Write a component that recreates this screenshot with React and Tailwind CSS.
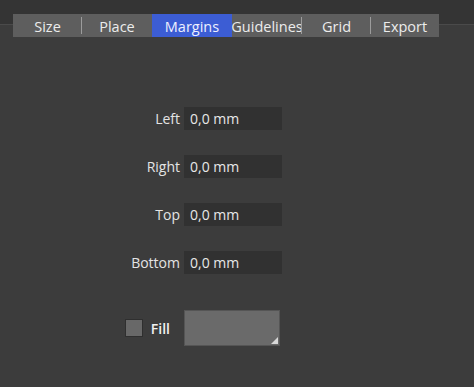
import React from "react";

const TABS = [
  { label: "Size", w: "w-[69px]", sep: true },
  { label: "Place", w: "w-[70px]", sep: false },
  { label: "Margins", w: "w-[80px]", sep: false, active: true },
  { label: "Guidelines", w: "w-[70px]", sep: true },
  { label: "Grid", w: "w-[69px]", sep: true },
  { label: "Export", w: "w-[68px]", sep: false },
];

const FIELDS = ["Left", "Right", "Top", "Bottom"];

export default function App() {
  return (
    <div
      className="w-[474px] h-[387px] overflow-hidden bg-[#3c3c3c] text-[#e2e2e2] bg-[linear-gradient(to_bottom,#343434_0,#343434_24px,#4a4a4a_24px,#4a4a4a_25px,#3c3c3c_25px)]"
      style={{ fontFamily: '"Open Sans", "Noto Sans", sans-serif' }}
    >
      <div className="flex pt-[14px] pl-[13px]">
        {TABS.map((t) => (
          <div
            key={t.label}
            className={`${t.w} h-[23px] flex items-center justify-center relative pt-[3px] text-[14.5px] leading-none ${
              t.active ? "bg-[#3c5dd4] text-[#eef0ff]" : "bg-[#5e5e5e] text-[#ececec]"
            }`}
          >
            <span className="whitespace-nowrap">{t.label}</span>
            {t.sep && (
              <span className="absolute right-0 top-[3px] h-[17px] w-px bg-[#9c9c9c]" />
            )}
          </div>
        ))}
      </div>

      <div className="mt-[70px] grid grid-cols-[180px_98px] gap-x-[4px] gap-y-[25px]">
        {FIELDS.map((f) => (
          <React.Fragment key={f}>
            <div className="h-[23px] flex items-center justify-end text-[14px] text-[#e4e4e4]">
              {f}
            </div>
            <div className="h-[23px] bg-[#313131] flex items-center pl-[6px] text-[14px] text-[#e8e8e8]">
              0,0 mm
            </div>
          </React.Fragment>
        ))}
      </div>

      <div className="mt-[36px] grid grid-cols-[180px_96px] gap-x-[4px]">
        <div className="flex items-center justify-end pr-[10px] gap-[8px]">
          <span className="w-[18px] h-[18px] bg-[#686868] border border-[#2f2f2f]" />
          <span className="text-[14px] font-semibold text-[#f0f0f0]">Fill</span>
        </div>
        <div className="relative h-[36px] bg-[#6a6a6a] border border-[#555]">
          <svg
            className="absolute right-[1px] bottom-[1px]"
            width="7"
            height="7"
            viewBox="0 0 7 7"
          >
            <polygon points="7,0 7,7 0,7" fill="#d8d8d8" />
          </svg>
        </div>
      </div>
    </div>
  );
}
